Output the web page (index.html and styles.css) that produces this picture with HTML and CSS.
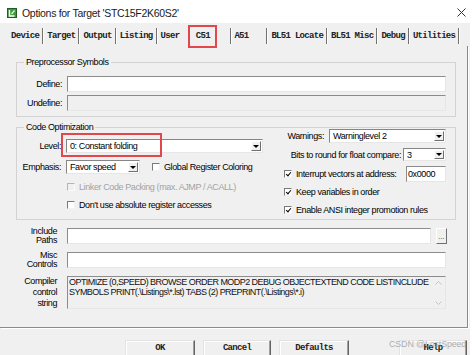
FILE: index.html
```html
<!doctype html>
<html lang="en">
  <head>
    <meta charset="UTF-8" />
    <meta name="viewport" content="width=device-width, initial-scale=1.0" />
    <title>Options for Target 'STC15F2K60S2'</title>
    <link rel="stylesheet" href="styles.css">
  </head>
  <body>
    <div class="window">
      <div class="titlebar">
        <svg class="app-icon" width="10" height="10" viewBox="0 0 10 10">
          <rect x="0.5" y="0.5" width="9" height="9" fill="#3f9a3f" stroke="#1e5e22" />
          <path d="M2.5 2 V8 H7.5" fill="none" stroke="#fff" stroke-width="1.4" />
          <path d="M4.5 6 L7.5 2.5" stroke="#e8f5e0" stroke-width="1.2" />
        </svg>
        <span class="title">Options for Target 'STC15F2K60S2'</span>
        <svg class="close" width="9" height="9" viewBox="0 0 9 9">
          <path d="M0.5 0.5 L8.5 8.5 M8.5 0.5 L0.5 8.5" stroke="#333" stroke-width="1" />
        </svg>
      </div>

      <div class="tabs">
        <span class="tab">Device</span><i class="sep"></i>
        <span class="tab">Target</span><i class="sep"></i>
        <span class="tab">Output</span><i class="sep"></i>
        <span class="tab">Listing</span><i class="sep"></i>
        <span class="tab">User</span>
        <span class="tab-active">C51</span><i class="sep"></i>
        <span class="tab tab-a51">A51</span><i class="sep"></i>
        <span class="tab">BL51 Locate</span><i class="sep"></i>
        <span class="tab">BL51 Misc</span><i class="sep"></i>
        <span class="tab">Debug</span><i class="sep"></i>
        <span class="tab">Utilities</span><i class="sep"></i>
      </div>

      <div class="panel">
        <fieldset class="group group-pre">
          <legend>Preprocessor Symbols</legend>
          <div class="field-row">
            <label>Define:</label>
            <div class="edit"></div>
          </div>
          <div class="field-row">
            <label>Undefine:</label>
            <div class="edit edit-disabled"></div>
          </div>
        </fieldset>

        <fieldset class="group group-opt">
          <legend>Code Optimization</legend>
          <div class="opt-grid">
            <div class="opt-left">
              <div class="opt-row">
                <label class="opt-label">Level:</label>
                <div class="combo combo-level">
                  <span class="combo-value">0: Constant folding</span><i class="arrow"></i>
                  <span class="highlight"></span>
                </div>
              </div>
              <div class="opt-row">
                <label class="opt-label">Emphasis:</label>
                <div class="combo combo-emph">
                  <span class="combo-value">Favor speed</span><i class="arrow"></i>
                </div>
                <span class="check check-global"><i class="box"></i>Global Register Coloring</span>
              </div>
              <div class="check indent disabled"><i class="box"></i>Linker Code Packing (max. AJMP / ACALL)</div>
              <div class="check indent last"><i class="box"></i>Don't use absolute register accesses</div>
            </div>

            <div class="opt-right">
              <div class="right-row row-warn">
                <label>Warnings:</label>
                <div class="combo combo-warn">
                  <span class="combo-value">Warninglevel 2</span><i class="arrow"></i>
                </div>
              </div>
              <div class="right-row row-bits">
                <label>Bits to round for float compare:</label>
                <div class="combo combo-bits">
                  <span class="combo-value">3</span><i class="arrow"></i>
                </div>
              </div>
              <div class="right-row row-int">
                <span class="check"><i class="box checked"></i>Interrupt vectors at address:</span>
                <div class="edit edit-addr">0x0000</div>
              </div>
              <div class="check row-keep"><i class="box checked"></i>Keep variables in order</div>
              <div class="check"><i class="box checked"></i>Enable ANSI integer promotion rules</div>
            </div>
          </div>
        </fieldset>

        <div class="paths">
          <div class="path-row">
            <label class="two-line">Include<br>Paths</label>
            <div class="path-input">
              <div class="edit"></div>
              <span class="browse">...</span>
            </div>
          </div>
          <div class="path-row">
            <label class="two-line">Misc<br>Controls</label>
            <div class="edit"></div>
          </div>
          <div class="path-row path-ctrl">
            <label class="three-line">Compiler<br>control<br>string</label>
            <div class="ctrl-string">
              <div class="ctrl-text">OPTIMIZE (0,SPEED) BROWSE ORDER MODP2 DEBUG OBJECTEXTEND CODE LISTINCLUDE<br>SYMBOLS PRINT(.\Listings\*.lst) TABS (2) PREPRINT(.\Listings\*.i)</div>
              <div class="ctrl-scroll">
                <svg width="7" height="4" viewBox="0 0 7 4"><path d="M0.5 3.5 L3.5 0.5 L6.5 3.5" fill="none" stroke="#c4c4c4" /></svg>
                <svg width="7" height="4" viewBox="0 0 7 4"><path d="M0.5 0.5 L3.5 3.5 L6.5 0.5" fill="none" stroke="#c4c4c4" /></svg>
              </div>
            </div>
          </div>
        </div>
      </div>

      <div class="buttons">
        <span class="btn btn-ok">OK</span>
        <span class="btn btn-cancel">Cancel</span>
        <span class="btn btn-defaults">Defaults</span>
        <span class="btn btn-help">Help</span>
        <span class="watermark">CSDN @LostSpeed</span>
      </div>
    </div>
  </body>
</html>
```

FILE: styles.css
```css
body {
  margin: 0;
  background-color: #fff;
  font-family: "Liberation Sans", Arial, sans-serif;
  font-size: 9px;
  letter-spacing: -0.4px;
  color: #000;
  overflow: hidden;
}
.window {
  width: 470px;
  height: 360px;
  background-color: #f0f0f0;
}

/* title bar */
.titlebar {
  height: 23px;
  display: flex;
  align-items: center;
  padding: 0 4px 0 7px;
  box-sizing: border-box;
  background-color: #fff;
}
.app-icon {
  margin: 2px 5px 0 0;
}
.title {
  flex: 1;
  font-size: 10.5px;
  letter-spacing: -0.3px;
  color: #1a1a1a;
  padding-top: 2px;
}
.close {
  margin-top: 1px;
}

/* tabs */
.tabs {
  height: 23px;
  display: flex;
  align-items: center;
  padding: 3px 0 0 7px;
  box-sizing: border-box;
  font-family: "Liberation Mono", "Courier New", monospace;
  font-weight: bold;
  font-size: 9px;
  letter-spacing: -0.7px;
  color: #222;
}
.tab {
  padding: 0 3px 0 4px;
  line-height: 12px;
  white-space: pre;
}
.tab-a51 {
  width: 35px;
  box-sizing: border-box;
  padding-left: 3px;
}
.sep {
  width: 1px;
  height: 16px;
  background-color: #707070;
  box-shadow: 1px 0 #fff;
}
.tab-active {
  width: 29px;
  height: 23px;
  margin: 0 13px 0 6px;
  box-sizing: border-box;
  border: 2px solid #e2474c;
  display: flex;
  align-items: center;
  justify-content: center;
  line-height: 12px;
}

/* main panel */
.panel {
  width: 468px;
  height: 282px;
  box-sizing: border-box;
  padding-top: 10px;
  border-right: 1px solid #8a8a8a;
  border-bottom: 1px solid #8a8a8a;
  box-shadow: 1px 1px #fff;
}
.group {
  width: 440px;
  box-sizing: border-box;
  margin: 0 0 0 16px;
  border: 1px solid #d3d3d3;
  min-inline-size: 0;
}
.group legend {
  margin-left: 7px;
  padding: 0 2px;
  line-height: 12px;
}
.group-pre {
  padding: 8px 9px 5px 0;
}
.group-opt {
  margin-top: 4px;
  padding: 0 0 3px 0;
}
.field-row {
  display: grid;
  grid-template-columns: 45px 1fr;
  column-gap: 5px;
  align-items: center;
}
.field-row + .field-row {
  margin-top: 3px;
}
label {
  text-align: right;
  white-space: nowrap;
}

.edit {
  height: 16px;
  box-sizing: border-box;
  background-color: #fff;
  border: 1px solid;
  border-color: #8c8c8c #e6e6e6 #e6e6e6 #8c8c8c;
}
.edit-disabled {
  background-color: #f0f0f0;
}

/* combo boxes */
.combo {
  position: relative;
  height: 14px;
  box-sizing: border-box;
  display: flex;
  align-items: center;
  background-color: #fff;
  border: 1px solid;
  border-color: #858585 #e6e6e6 #e6e6e6 #858585;
}
.combo-value {
  flex: 1;
  padding-left: 3px;
  line-height: 12px;
}
.arrow {
  width: 10px;
  height: 10px;
  margin-right: 1px;
  box-sizing: border-box;
  border: 1px solid;
  border-color: #fff #6f6f6f #6f6f6f #fff;
  background-color: #f0f0f0;
  display: flex;
  align-items: center;
  justify-content: center;
}
.arrow::after {
  content: "";
  border-left: 3px solid transparent;
  border-right: 3px solid transparent;
  border-top: 3px solid #000;
}
.highlight {
  position: absolute;
  left: -6px;
  top: -7px;
  width: 101px;
  height: 24px;
  box-sizing: border-box;
  border: 2px solid #e2474c;
}

/* code optimization */
.opt-grid {
  display: grid;
  grid-template-columns: 267px 1fr;
}
.opt-left {
  padding-top: 6px;
  display: flex;
  flex-direction: column;
}
.opt-row {
  display: flex;
  align-items: center;
  margin-bottom: 7px;
}
.opt-label {
  width: 44px;
  margin-right: 5px;
}
.combo-level {
  width: 197px;
}
.combo-emph {
  width: 74px;
}
.check-global {
  margin-left: 12px;
}
.check {
  display: flex;
  align-items: center;
  gap: 4px;
  height: 12px;
  line-height: 12px;
  white-space: nowrap;
}
.indent {
  padding-left: 50px;
  margin-bottom: 6px;
}
.indent.last {
  margin-bottom: 0;
}
.box {
  width: 8px;
  height: 8px;
  box-sizing: border-box;
  border: 1px solid;
  border-color: #7a7a7a #f4f4f4 #f4f4f4 #7a7a7a;
  background-color: #fff;
  display: flex;
  align-items: center;
  justify-content: center;
}
.box.checked::after {
  content: "";
  width: 2px;
  height: 4px;
  margin-top: -1px;
  border: solid #000;
  border-width: 0 1.5px 1.5px 0;
  transform: rotate(40deg);
}
.disabled {
  color: #a3a3a3;
}
.disabled .box {
  background-color: #f0f0f0;
  border-color: #b4b4b4 #fafafa #fafafa #b4b4b4;
}

.opt-right {
  margin-top: -4px;
  padding-right: 9px;
  display: flex;
  flex-direction: column;
}
.right-row {
  display: flex;
  align-items: center;
  justify-content: flex-end;
}
.row-warn {
  gap: 5px;
  margin-bottom: 5px;
}
.combo-warn {
  width: 117px;
}
.row-bits {
  gap: 2px;
  margin-bottom: 5px;
}
.combo-bits {
  width: 43px;
  height: 13px;
}
.combo-bits .arrow {
  height: 9px;
}
.row-int {
  justify-content: space-between;
  margin-bottom: 4px;
}
.edit-addr {
  width: 40px;
  padding-left: 1px;
  line-height: 14px;
}
.row-keep {
  margin-bottom: 6px;
}

/* include / misc / control string */
.paths {
  width: 446px;
  margin-top: 7px;
}
.path-row {
  display: grid;
  grid-template-columns: 57px 1fr;
  column-gap: 10px;
  align-items: center;
}
.path-row + .path-row {
  margin-top: 6px;
}
.path-ctrl {
  align-items: start;
  margin-top: 7px !important;
}
.two-line {
  line-height: 9px;
}
.three-line {
  line-height: 11px;
}
.path-input {
  display: flex;
  gap: 5px;
}
.path-input .edit {
  flex: 1;
}
.browse {
  width: 11px;
  height: 16px;
  margin-right: -1px;
  box-sizing: border-box;
  border: 1px solid;
  border-color: #fff #6f6f6f #6f6f6f #fff;
  font-size: 7px;
  letter-spacing: 0;
  text-align: center;
  line-height: 16px;
  color: #333;
}
.ctrl-string {
  height: 33px;
  box-sizing: border-box;
  display: flex;
  background-color: #f0f0f0;
  border: 1px solid;
  border-color: #8c8c8c #e6e6e6 #e6e6e6 #8c8c8c;
}
.ctrl-text {
  flex: 1;
  padding-left: 1px;
  line-height: 10px;
  letter-spacing: -0.55px;
  white-space: nowrap;
  color: #111;
}
.ctrl-scroll {
  width: 14px;
  display: flex;
  flex-direction: column;
  justify-content: space-between;
  align-items: center;
  padding: 4px 0 3px;
}

/* dialog buttons */
.buttons {
  position: relative;
  display: flex;
  gap: 8px;
  padding: 12px 0 0 125px;
  font-family: "Liberation Mono", "Courier New", monospace;
  font-weight: bold;
  font-size: 9px;
  letter-spacing: -0.7px;
  color: #222;
}
.btn {
  width: 70px;
  height: 19px;
  box-sizing: border-box;
  border: 1px solid;
  border-color: #e3e3e3 #646464 #646464 #e3e3e3;
  box-shadow: inset -1px -1px #a0a0a0, inset 1px 1px #fff;
  text-align: center;
  line-height: 14px;
}
.btn-cancel,
.btn-help {
  width: 68px;
}
.btn-help {
  margin-left: 42px;
}
.watermark {
  position: absolute;
  left: 389px;
  top: 10px;
  font-family: "Liberation Sans", Arial, sans-serif;
  font-weight: normal;
  font-size: 9px;
  letter-spacing: -0.2px;
  line-height: 12px;
  color: rgba(150, 150, 150, 0.75);
}
```
